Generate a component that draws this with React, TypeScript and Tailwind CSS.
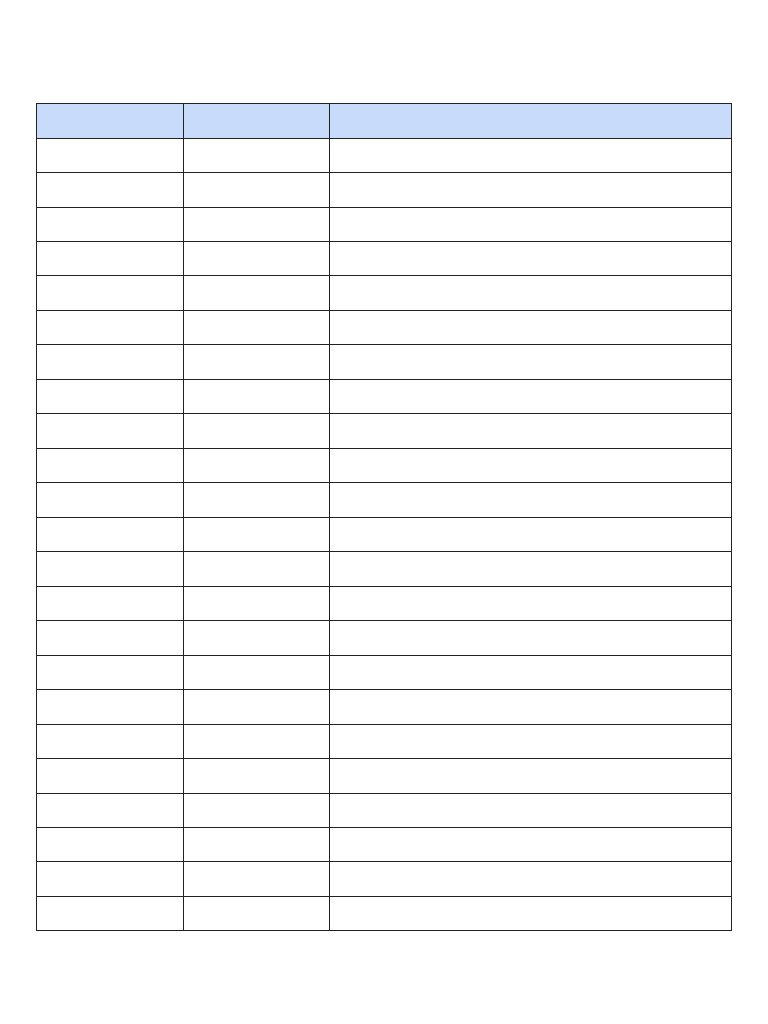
export default function App() {
  const rows = Array.from({ length: 23 }, (_, i) => i);
  return (
    <div className="w-[768px] h-[1024px] bg-white pt-[103px] pl-[36px]" style={{ fontFamily: '"Liberation Sans", Arial, sans-serif' }}>
      <table className="w-[696px] border-collapse table-fixed">
        <colgroup>
          <col className="w-[147px]" />
          <col className="w-[146px]" />
          <col />
        </colgroup>
        <thead>
          <tr className="h-[34.6px] bg-[#c9dbfb]">
            <th className="border border-[#222]"></th>
            <th className="border border-[#222]"></th>
            <th className="border border-[#222]"></th>
          </tr>
        </thead>
        <tbody>
          {rows.map((r) => (
            <tr key={r} className="h-[34.47px]">
              <td className="border border-[#222]"></td>
              <td className="border border-[#222]"></td>
              <td className="border border-[#222]"></td>
            </tr>
          ))}
        </tbody>
      </table>
    </div>
  );
}
